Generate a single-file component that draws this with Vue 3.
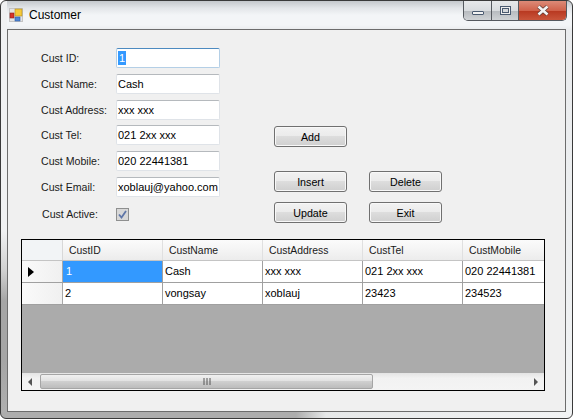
<script setup>
const fields = [
  { label: 'Cust ID:', value: '1', focus: true },
  { label: 'Cust Name:', value: 'Cash' },
  { label: 'Cust Address:', value: 'xxx xxx' },
  { label: 'Cust Tel:', value: '021 2xx xxx' },
  { label: 'Cust Mobile:', value: '020 22441381' },
  { label: 'Cust Email:', value: 'xoblauj@yahoo.com' },
]
const cols = ['CustID', 'CustName', 'CustAddress', 'CustTel', 'CustMobile']
const rows = [
  { current: true, cells: ['1', 'Cash', 'xxx xxx', '021 2xx xxx', '020 22441381'] },
  { current: false, cells: ['2', 'vongsay', 'xoblauj', '23423', '234523'] },
]
</script>

<template>
  <div class="window">
    <header class="titlebar">
      <div class="title">
        <svg class="appicon" width="14" height="14" viewBox="0 0 14 14">
          <rect x="0.5" y="0.5" width="13" height="13" fill="#e4e4e4" stroke="#c4c4c4" />
          <rect x="1" y="5" width="4" height="5" fill="#d8322a" stroke="#8a1f1a" stroke-width="0.6" />
          <rect x="6" y="1" width="7" height="7" fill="#f5c93a" stroke="#b08a1e" stroke-width="0.6" />
          <rect x="6" y="9" width="5" height="4" fill="#4f86d8" stroke="#2c5da5" stroke-width="0.6" />
        </svg>
        <span>Customer</span>
      </div>
      <div class="caption">
        <div class="cbtn min"><i class="minbar"></i></div>
        <div class="cbtn max"><i class="maxbox"></i></div>
        <div class="cbtn close">
          <svg width="14" height="11" viewBox="0 0 14 11">
            <path d="M2.5 1.5 L11.5 9.5 M11.5 1.5 L2.5 9.5" stroke="#5a3a34" stroke-width="4" fill="none" />
            <path d="M2.5 1.5 L11.5 9.5 M11.5 1.5 L2.5 9.5" stroke="#f4f4f4" stroke-width="2.6" fill="none" />
          </svg>
        </div>
      </div>
    </header>

    <main class="client">
      <section class="top">
        <div class="form">
          <div v-for="f in fields" :key="f.label" class="row">
            <label class="lbl">{{ f.label }}</label>
            <div class="input" :class="{ focus: f.focus }">
              <span :class="{ sel: f.focus }">{{ f.value }}</span>
            </div>
          </div>
          <div class="row active">
            <label class="lbl shift">Cust Active:</label>
            <div class="check">
              <svg width="9" height="9" viewBox="0 0 9 9">
                <path d="M1 4.5 L3.5 7.5 L8 1" stroke="#5f76a8" stroke-width="1.8" fill="none" />
              </svg>
            </div>
          </div>
        </div>
        <div class="actions">
          <div class="btnrow add"><button class="btn">Add</button></div>
          <div class="btnrow insert"><button class="btn">Insert</button><button class="btn">Delete</button></div>
          <div class="btnrow"><button class="btn">Update</button><button class="btn">Exit</button></div>
        </div>
      </section>

      <section class="grid">
        <div class="ghead">
          <div class="rh corner"></div>
          <div v-for="c in cols" :key="c" class="hc">{{ c }}</div>
        </div>
        <div v-for="r in rows" :key="r.cells[0]" class="grow">
          <div class="rh">
            <svg v-if="r.current" width="6" height="10" viewBox="0 0 6 10"><path d="M0 0 L6 5 L0 10 Z" fill="#000" /></svg>
          </div>
          <div v-for="(c, i) in r.cells" :key="i" class="cell" :class="{ selected: r.current && i === 0 }">{{ c }}</div>
        </div>
        <div class="empty"></div>
        <div class="hscroll">
          <div class="arrow"><svg width="5" height="8" viewBox="0 0 5 8"><path d="M4 0 L0 4 L4 8 Z" fill="#555" /></svg></div>
          <div class="track">
            <div class="thumb">
              <svg width="8" height="7" viewBox="0 0 8 7"><path d="M1 0 V7 M4 0 V7 M7 0 V7" stroke="#555" stroke-width="1" /></svg>
            </div>
          </div>
          <div class="arrow"><svg width="5" height="8" viewBox="0 0 5 8"><path d="M1 0 L5 4 L1 8 Z" fill="#555" /></svg></div>
        </div>
      </section>
    </main>
  </div>
</template>

<style scoped>
.window {
  width: 573px;
  height: 419px;
  box-sizing: border-box;
  padding: 0 6px 6px 6px;
  display: flex;
  flex-direction: column;
  border: 1px solid #3a3a3a;
  border-radius: 6px 6px 6px 6px;
  background:
    linear-gradient(90deg, #adadad 0, #adadad 295px, #e6e8e9 325px, #f2f3f4 100%) 0 100% / 100% 6px no-repeat,
    linear-gradient(180deg, #f0f1f2 0, #f0f1f2 230px, #d0d0d0 270px, #a5a5a5 300px, #a5a5a5 360px, #b0b0b0 100%) 0 0 / 6px 100% no-repeat,
    linear-gradient(180deg, #c4c8cc 0, #e2e5e8 7px, #f3f5f7 14px, #f3f5f7 24px, #e9ebed 29px, #f1f3f4 100%);
  font-family: "Liberation Sans", Arial, sans-serif;
  font-size: 11px;
  color: #000;
  overflow: hidden;
}
.titlebar {
  height: 28px;
  flex: none;
  display: flex;
  justify-content: space-between;
  align-items: flex-start;
}
.title {
  display: flex;
  align-items: center;
  gap: 6px;
  height: 28px;
  padding-left: 2px;
  font-size: 12px;
}
.caption {
  display: flex;
  height: 19px;
  margin-right: -1px;
  border: 1px solid #55595f;
  border-top: none;
  border-radius: 0 0 5px 5px;
  overflow: hidden;
}
.cbtn {
  display: flex;
  align-items: center;
  justify-content: center;
  background: linear-gradient(180deg, #e6e8ea 0, #d9dcdf 50%, #b8bcc0 55%, #cfd2d5 100%);
}
.min { width: 27px; border-right: 1px solid #55595f; }
.max { width: 26px; border-right: 1px solid #55595f; }
.close { width: 47px; background: linear-gradient(180deg, #dc8b78 0, #d0624b 50%, #b93a22 55%, #c9553b 100%); }
.minbar {
  width: 10px; height: 2px; background: #f2f2f2; border: 1px solid #4a5a70; border-radius: 1px; margin-top: 5px;
}
.maxbox {
  width: 5px; height: 3px; background: #d5d8db; box-shadow: 0 0 0 1px #4a5a70, 0 0 0 2px #eee, 0 0 0 3px #4a5a70;
}
.client {
  flex: 1;
  background: #f0f0f0;
  border: 1px solid #6c6c6c;
  padding: 18px 20px 0 13px;
  display: flex;
  flex-direction: column;
  box-sizing: border-box;
}
.top {
  display: flex;
  height: 191px;
  flex: none;
}
.form {
  width: 253px;
  display: flex;
  flex-direction: column;
  padding-left: 20px;
  box-sizing: border-box;
}
.row {
  display: flex;
  align-items: center;
  height: 20px;
  margin-bottom: 5.75px;
  flex: none;
}
.row.active { margin-top: 5px; height: 13px; }
.lbl {
  width: 75px;
  flex: none;
  color: #1a1a1a;
  font-size: 10.6px;
}
.shift { padding-left: 1px; box-sizing: border-box; }
.input {
  width: 104px;
  height: 20px;
  box-sizing: border-box;
  border: 1px solid #dfe3e8;
  border-top-color: #b5b9bd;
  border-radius: 2px;
  background: #fff;
  padding: 0 1px;
  display: flex;
  align-items: center;
  white-space: nowrap;
  overflow: hidden;
}
.input.focus {
  border-color: #b4cfe6;
  border-top-color: #4d8ac0;
}
.sel { background: #3399ff; color: #fff; padding: 0 1px; line-height: 14px; }
.check {
  width: 13px;
  height: 13px;
  box-sizing: border-box;
  border: 1px solid #8e8f8f;
  background: #d8d8d8;
  display: flex;
  align-items: center;
  justify-content: center;
}
.actions {
  display: flex;
  flex-direction: column;
  padding-top: 78px;
  box-sizing: border-box;
}
.btnrow { display: flex; gap: 22px; margin-bottom: 10px; }
.btnrow.add { margin-bottom: 24px; }
.btn {
  width: 73px;
  height: 21px;
  padding: 0;
  font: inherit;
  font-size: 10.7px;
  color: #000;
  border: 1px solid #707070;
  border-radius: 3px;
  background: linear-gradient(180deg, #f2f2f2 0, #ebebeb 48%, #dddddd 50%, #cfcfcf 100%);
  box-shadow: inset 0 0 0 1px #f8f8f8;
}
.grid {
  width: 524px;
  height: 152px;
  box-sizing: border-box;
  border: 1px solid #000;
  display: flex;
  flex-direction: column;
  flex: none;
  background: #ababab;
  overflow: hidden;
}
.ghead {
  display: flex;
  height: 21px;
  flex: none;
  overflow: hidden;
  background: linear-gradient(180deg, #fbfbfb 0, #f4f4f4 50%, #ececec 100%);
  border-bottom: 1px solid #c4c4c4;
  box-sizing: border-box;
}
.rh {
  width: 41px;
  flex: none;
  box-sizing: border-box;
  border-right: 1px solid #a8a8a8;
  background: linear-gradient(90deg, #fafafa 0, #f0f0f0 100%);
  display: flex;
  align-items: center;
  padding-left: 6px;
}
.corner { background: #f2f4f6; border-right-color: #d8d8d8; }
.hc {
  width: 100px;
  flex: none;
  box-sizing: border-box;
  padding-left: 6px;
  border-right: 1px solid #e0e0e0;
  display: flex;
  align-items: center;
  color: #1a1a1a;
  font-size: 10.4px;
  padding-top: 1px;
}
.hc:last-child { border-right: none; }
.grow {
  display: flex;
  height: 22px;
  flex: none;
  border-bottom: 1px solid #a0a0a0;
  box-sizing: border-box;
  overflow: hidden;
}
.cell {
  width: 100px;
  flex: none;
  box-sizing: border-box;
  background: #fff;
  border-right: 1px solid #a0a0a0;
  padding-left: 2px;
  padding-bottom: 1px;
  display: flex;
  align-items: center;
  white-space: nowrap;
}
.cell.selected { padding-left: 3px; }
.cell:last-child { border-right: none; }
.cell.selected { background: #3399ff; color: #fff; }
.empty { flex: 1; background: #ababab; }
.hscroll {
  height: 17px;
  flex: none;
  display: flex;
  background: linear-gradient(180deg, #e4e4e4 0, #f2f2f2 30%, #f4f4f4 100%);
}
.arrow {
  width: 17px;
  flex: none;
  display: flex;
  align-items: center;
  justify-content: center;
}
.track { flex: 1; padding: 1px; box-sizing: border-box; display: flex; }
.thumb {
  width: 333px;
  box-sizing: border-box;
  border: 1px solid #a5a5a5;
  border-radius: 2px;
  background: linear-gradient(180deg, #f0f0f0 0, #e2e2e2 45%, #cfcfcf 50%, #bcbcbc 100%);
  display: flex;
  align-items: center;
  justify-content: center;
}
</style>
